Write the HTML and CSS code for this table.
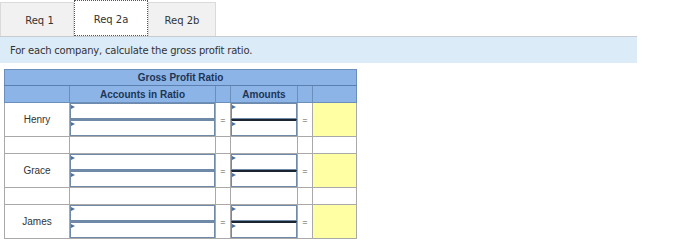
FILE: index.html
```html
<!DOCTYPE html>
<html lang="en">
<head>
	<meta charset="UTF-8">
	<title>Gross Profit Ratio</title>
	<link rel="stylesheet" href="styles.css">
</head>
<body>
	<ul class="tabs">
		<li>Req 1</li>
		<li class="active">Req 2a</li>
		<li>Req 2b</li>
	</ul>
	<div class="note">For each company, calculate the gross profit ratio.</div>

	<table class="ratio">
		<colgroup>
			<col class="c-name">
			<col class="c-acct">
			<col class="c-eq">
			<col class="c-amt">
			<col class="c-eq">
			<col class="c-res">
		</colgroup>
		<tr class="head">
			<th colspan="6">Gross Profit Ratio</th>
		</tr>
		<tr class="head">
			<th></th>
			<th>Accounts in Ratio</th>
			<th></th>
			<th>Amounts</th>
			<th></th>
			<th></th>
		</tr>
		<tr class="row">
			<td class="name">Henry</td>
			<td class="frac"><div class="inp"></div><div class="inp"></div></td>
			<td class="eq">=</td>
			<td class="frac amt"><div class="inp"></div><div class="inp"></div></td>
			<td class="eq">=</td>
			<td class="res"></td>
		</tr>
		<tr class="gap"><td></td><td></td><td></td><td></td><td></td><td></td></tr>
		<tr class="row">
			<td class="name">Grace</td>
			<td class="frac"><div class="inp"></div><div class="inp"></div></td>
			<td class="eq">=</td>
			<td class="frac amt"><div class="inp"></div><div class="inp"></div></td>
			<td class="eq">=</td>
			<td class="res"></td>
		</tr>
		<tr class="gap"><td></td><td></td><td></td><td></td><td></td><td></td></tr>
		<tr class="row">
			<td class="name">James</td>
			<td class="frac"><div class="inp"></div><div class="inp"></div></td>
			<td class="eq">=</td>
			<td class="frac amt"><div class="inp"></div><div class="inp"></div></td>
			<td class="eq">=</td>
			<td class="res"></td>
		</tr>
	</table>
</body>
</html>
```

FILE: styles.css
```css
*{
	margin: 0;
	padding: 0;
	box-sizing: border-box;
}
body{
	background: #fff;
	font-family: "DejaVu Sans", Verdana, sans-serif;
	color: #333;
}
.tabs{
	display: flex;
	height: 36px;
	padding-top: 2px;
	list-style: none;
}
.tabs li{
	width: 74px;
	height: 34px;
	background: #f1f1f1;
	border: 1px solid #dadada;
	border-bottom: none;
	font-size: 10px;
	line-height: 35px;
	text-align: center;
	color: #333;
}
.tabs li:first-child{
	padding-left: 5px;
}
.tabs li.active{
	height: 36px;
	margin-top: -2px;
	background: #fff;
	border: 1px dotted #555;
	line-height: 38px;
}
.tabs li:last-child{
	width: 68px;
}
.note{
	width: 637px;
	height: 27px;
	background: #dcebf8;
	border-top: 1px solid #c8ccd0;
	padding-left: 10px;
	font-size: 10px;
	letter-spacing: -0.2px;
	line-height: 27px;
	color: #333;
}
.ratio{
	margin: 6px 0 0 4px;
	width: 352px;
	border-collapse: collapse;
	table-layout: fixed;
	font-family: "Liberation Sans", Arial, sans-serif;
	font-size: 10px;
}
.c-name{ width: 65px; }
.c-acct{ width: 146px; }
.c-eq{ width: 15px; }
.c-amt{ width: 67px; }
.c-res{ width: 44px; }
.ratio th{
	background: #8cb4e6;
	border: 1px solid #6b8fbd;
	color: #1d3557;
	font-weight: bold;
	height: 17px;
	padding: 0;
}
.ratio tr.head:first-child th{
	height: 16px;
	border-bottom-color: #5b7fae;
}
.ratio td{
	border: 1px solid #a9a9a9;
	padding: 0;
	text-align: center;
	color: #333;
}
.ratio tr.row td{
	height: 34px;
}
.ratio tr.gap td{
	height: 17px;
}
.ratio td.name{
	font-size: 10px;
}
.ratio td.eq{
	font-size: 9px;
	color: #555;
}
.ratio td.res{
	background: #ffffa3;
}
.ratio tr.gap td:last-child{
	background: #fff;
}
.frac{
	vertical-align: top;
}
.inp{
	position: relative;
	height: 16px;
	border: 1px solid #6f8aa8;
	background: #fff;
}
.inp + .inp{
	border-top: 2px solid #6f8aa8;
	height: 17px;
}
.amt .inp + .inp{
	border-top-color: #1a2330;
}
/* small marker in the corner of each field */
.inp::before{
	content: "";
	position: absolute;
	left: 0;
	top: 1px;
	border-left: 4px solid #4a6fa0;
	border-top: 2.5px solid transparent;
	border-bottom: 2.5px solid transparent;
}
```
